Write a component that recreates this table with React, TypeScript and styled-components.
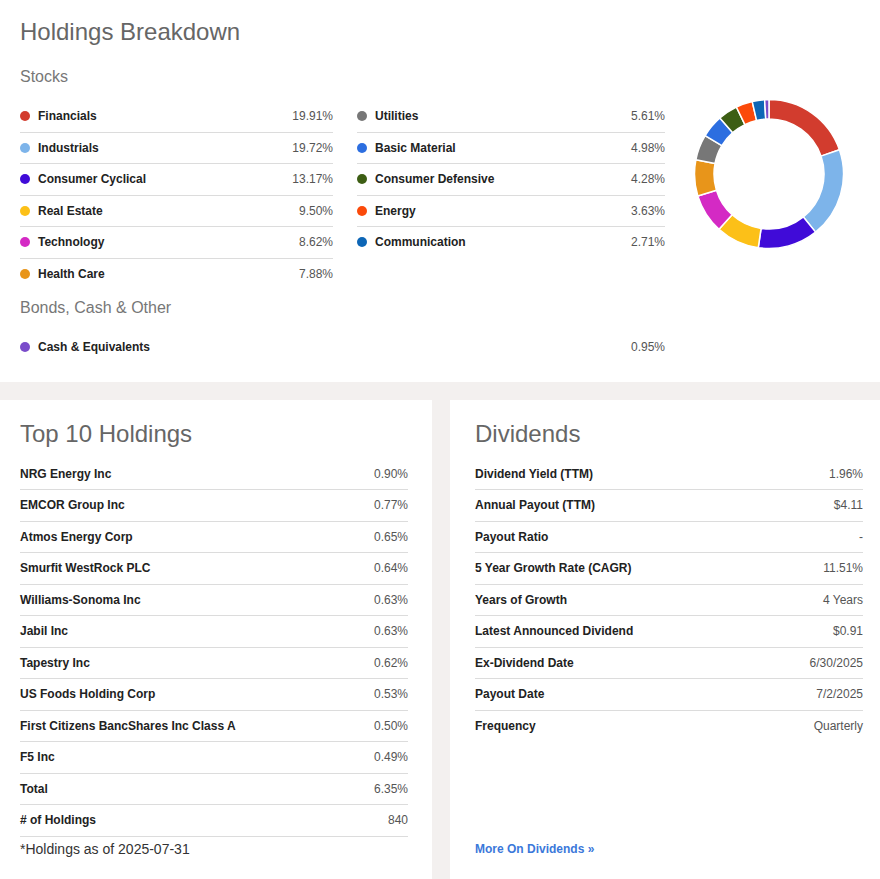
import React from "react";
import styled, { createGlobalStyle } from "styled-components";

const GlobalStyle = createGlobalStyle`
  html, body { margin: 0; padding: 0; overflow: hidden; }
  body {
    background: #f3f0ef;
    font-family: "Liberation Sans", Arial, sans-serif;
    color: #222;
  }
  * { box-sizing: border-box; }
`;

type Slice = { name: string; value: number; color: string };

const stocksLeft: Slice[] = [
  { name: "Financials", value: 19.91, color: "#d23c2e" },
  { name: "Industrials", value: 19.72, color: "#7db4ea" },
  { name: "Consumer Cyclical", value: 13.17, color: "#400bd8" },
  { name: "Real Estate", value: 9.5, color: "#fcc018" },
  { name: "Technology", value: 8.62, color: "#d42ac4" },
  { name: "Health Care", value: 7.88, color: "#e8951a" },
];

const stocksRight: Slice[] = [
  { name: "Utilities", value: 5.61, color: "#777777" },
  { name: "Basic Material", value: 4.98, color: "#2c6ee0" },
  { name: "Consumer Defensive", value: 4.28, color: "#3d5e14" },
  { name: "Energy", value: 3.63, color: "#fb4a0a" },
  { name: "Communication", value: 2.71, color: "#0d66b6" },
];

const cash: Slice = { name: "Cash & Equivalents", value: 0.95, color: "#7a4cca" };

const top10: [string, string][] = [
  ["NRG Energy Inc", "0.90%"],
  ["EMCOR Group Inc", "0.77%"],
  ["Atmos Energy Corp", "0.65%"],
  ["Smurfit WestRock PLC", "0.64%"],
  ["Williams-Sonoma Inc", "0.63%"],
  ["Jabil Inc", "0.63%"],
  ["Tapestry Inc", "0.62%"],
  ["US Foods Holding Corp", "0.53%"],
  ["First Citizens BancShares Inc Class A", "0.50%"],
  ["F5 Inc", "0.49%"],
  ["Total", "6.35%"],
  ["# of Holdings", "840"],
];

const dividends: [string, string][] = [
  ["Dividend Yield (TTM)", "1.96%"],
  ["Annual Payout (TTM)", "$4.11"],
  ["Payout Ratio", "-"],
  ["5 Year Growth Rate (CAGR)", "11.51%"],
  ["Years of Growth", "4 Years"],
  ["Latest Announced Dividend", "$0.91"],
  ["Ex-Dividend Date", "6/30/2025"],
  ["Payout Date", "7/2/2025"],
  ["Frequency", "Quarterly"],
];

const Page = styled.div`
  width: 880px;
  display: flex;
  flex-direction: column;
  gap: 18px;
`;

const Panel = styled.section`
  background: #fff;
  padding: 18px 20px 18px 20px;
`;

const Title = styled.h2`
  margin: 0;
  font-size: 24px;
  line-height: 28px;
  font-weight: 400;
  color: #666;
`;

const SubTitle = styled.h3<{ $mt: number }>`
  margin: ${(p) => p.$mt}px 0 0 0;
  font-size: 16px;
  line-height: 20px;
  font-weight: 400;
  color: #777;
`;

const StocksRow = styled.div`
  display: flex;
  align-items: flex-start;
  margin-top: 14px;
`;

const List = styled.div<{ $width?: number; $ml?: number; $mt?: number; $lastBorder?: boolean }>`
  display: flex;
  flex-direction: column;
  width: ${(p) => (p.$width ? `${p.$width}px` : "auto")};
  margin-left: ${(p) => p.$ml ?? 0}px;
  margin-top: ${(p) => p.$mt ?? 0}px;
  & > div:last-child {
    border-bottom-color: ${(p) => (p.$lastBorder ? "#dcdcdc" : "transparent")};
  }
`;

const Row = styled.div`
  display: flex;
  align-items: center;
  justify-content: space-between;
  height: 31.5px;
  border-bottom: 1px solid #dcdcdc;
`;

const LabelGroup = styled.div`
  display: flex;
  align-items: center;
`;

const Dot = styled.span<{ $color: string }>`
  width: 10px;
  height: 10px;
  border-radius: 50%;
  background: ${(p) => p.$color};
  margin-right: 8px;
  flex: none;
`;

const Label = styled.span`
  font-size: 12px;
  line-height: 14px;
  font-weight: 700;
  color: #222;
`;

const Value = styled.span`
  font-size: 12px;
  line-height: 14px;
  color: #555;
`;

const DonutBox = styled.div`
  width: 150px;
  height: 150px;
  margin-left: 29px;
  margin-top: -2px;
  flex: none;
`;

const Cards = styled.div`
  display: grid;
  grid-template-columns: 432px 430px;
  column-gap: 18px;
  height: 479px;
`;

const Card = styled.section<{ $pl: number; $pr: number }>`
  background: #fff;
  display: flex;
  flex-direction: column;
  padding: 20px ${(p) => p.$pr}px 0 ${(p) => p.$pl}px;
`;

const Footnote = styled.p`
  margin: 3px 0 0 0;
  font-size: 14px;
  line-height: 18px;
  color: #333;
`;

const MoreLink = styled.a`
  margin-top: auto;
  margin-bottom: 23px;
  font-size: 12px;
  line-height: 14px;
  font-weight: 700;
  color: #3b78da;
  text-decoration: none;
  cursor: pointer;
`;

function Donut({ data }: { data: Slice[] }) {
  const total = data.reduce((s, d) => s + d.value, 0);
  const cx = 75;
  const cy = 75;
  const R = 74.5;
  const r = 55;
  const pt = (rad: number, a: number) =>
    `${(cx + rad * Math.sin(a)).toFixed(3)} ${(cy - rad * Math.cos(a)).toFixed(3)}`;
  let acc = 0;
  return (
    <svg width="150" height="150" viewBox="0 0 150 150">
      {data.map((d) => {
        const a0 = (acc / total) * Math.PI * 2;
        acc += d.value;
        const a1 = (acc / total) * Math.PI * 2;
        const large = a1 - a0 > Math.PI ? 1 : 0;
        const path = `M ${pt(R, a0)} A ${R} ${R} 0 ${large} 1 ${pt(R, a1)} L ${pt(r, a1)} A ${r} ${r} 0 ${large} 0 ${pt(r, a0)} Z`;
        return <path key={d.name} d={path} fill={d.color} stroke="#fff" strokeWidth={1.5} strokeLinejoin="round" />;
      })}
    </svg>
  );
}

function StockList({ items, width, ml }: { items: Slice[]; width: number; ml?: number }) {
  return (
    <List $width={width} $ml={ml}>
      {items.map((s) => (
        <Row key={s.name}>
          <LabelGroup>
            <Dot $color={s.color} />
            <Label>{s.name}</Label>
          </LabelGroup>
          <Value>{s.value.toFixed(2)}%</Value>
        </Row>
      ))}
    </List>
  );
}

export default function App() {
  const all = [...stocksLeft, ...stocksRight, cash];
  return (
    <>
      <GlobalStyle />
      <Page>
        <Panel>
          <Title>Holdings Breakdown</Title>
          <SubTitle $mt={21}>Stocks</SubTitle>
          <StocksRow>
            <StockList items={stocksLeft} width={313} />
            <StockList items={stocksRight} width={308} ml={24} />
            <DonutBox>
              <Donut data={all} />
            </DonutBox>
          </StocksRow>
          <SubTitle $mt={8}>Bonds, Cash &amp; Other</SubTitle>
          <List $width={645} $mt={14}>
            <Row>
              <LabelGroup>
                <Dot $color={cash.color} />
                <Label>{cash.name}</Label>
              </LabelGroup>
              <Value>{cash.value.toFixed(2)}%</Value>
            </Row>
          </List>
        </Panel>
        <Cards>
          <Card $pl={20} $pr={24}>
            <Title>Top 10 Holdings</Title>
            <List $mt={11} $lastBorder>
              {top10.map(([k, v]) => (
                <Row key={k}>
                  <Label>{k}</Label>
                  <Value>{v}</Value>
                </Row>
              ))}
            </List>
            <Footnote>*Holdings as of 2025-07-31</Footnote>
          </Card>
          <Card $pl={25} $pr={17}>
            <Title>Dividends</Title>
            <List $mt={11}>
              {dividends.map(([k, v]) => (
                <Row key={k}>
                  <Label>{k}</Label>
                  <Value>{v}</Value>
                </Row>
              ))}
            </List>
            <MoreLink>More On Dividends »</MoreLink>
          </Card>
        </Cards>
      </Page>
    </>
  );
}
